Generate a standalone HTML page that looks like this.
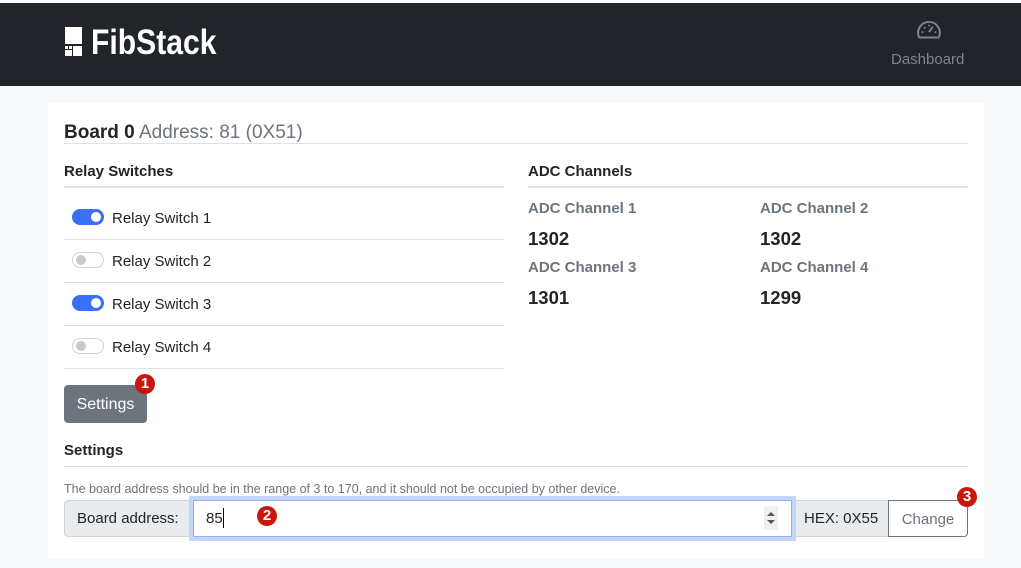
<!DOCTYPE html>
<html><head><meta charset="utf-8"><style>
*{box-sizing:border-box;margin:0;padding:0}
body{width:1021px;height:568px;overflow:hidden;background:#f8f9fa;font-family:"Liberation Sans",sans-serif;color:#212529;position:relative}
.a{position:absolute}
.nav{left:0;top:3px;width:1021px;height:83px;background:#212529}
.card{left:48px;top:103px;width:936px;height:456px;background:#fff}
.t{position:absolute;white-space:nowrap}
.line{position:absolute;background:#dee2e6}
.tog{position:absolute;left:72px;width:32px;height:16px;border-radius:8px}
.on{background:#3b6ff5}
.on::after{content:"";position:absolute;right:3px;top:3px;width:10px;height:10px;border-radius:50%;background:#fff}
.off{background:#fff;border:1px solid #ced4da}
.off::after{content:"";position:absolute;left:3px;top:2px;width:10px;height:10px;border-radius:50%;background:#c8cbce}
.badge{position:absolute;width:20px;height:20px;border-radius:50%;background:#c8170d;color:#fff;font-weight:bold;font-size:15px;text-align:center;line-height:20px}
</style></head><body>
<div class="a nav"></div>
<svg class="a" style="left:65px;top:27px" width="18" height="30" viewBox="0 0 18 30"><rect x="0" y="0" width="17" height="17" fill="#fff"/><rect x="0" y="19" width="3" height="3" fill="#fff"/><rect x="4" y="19" width="3" height="3" fill="#fff"/><rect x="0" y="23" width="7" height="6" fill="#fff"/><rect x="8" y="19" width="9" height="10" fill="#fff"/></svg>
<div class="t" style="left:91px;top:23px;font-size:35px;font-weight:bold;color:#fff;transform:scaleX(0.86);transform-origin:left top">FibStack</div>
<svg class="a" style="left:916px;top:20px" width="26" height="22" viewBox="0 0 24 20"><path d="M3 16 A10 10 0 1 1 21 16 Z" fill="none" stroke="#7f858a" stroke-width="1.8" stroke-linejoin="round"/><path d="M12 11 L15.5 6" stroke="#7f858a" stroke-width="1.8"/><circle cx="6" cy="11" r="0.9" fill="#7f858a"/><circle cx="8" cy="7" r="0.9" fill="#7f858a"/><circle cx="12" cy="5" r="0.9" fill="#7f858a"/><circle cx="18" cy="11" r="0.9" fill="#7f858a"/></svg>
<div class="t" style="left:891px;top:51px;font-size:15px;color:#7f858a">Dashboard</div>
<div class="a card"></div>
<div class="t" style="left:64px;top:122px;font-size:19px"><span style="font-weight:600">Board 0</span> <span style="color:#6c757d">Address: 81 (0X51)</span></div>
<div class="line" style="left:64px;top:143px;width:904px;height:1px"></div>
<div class="t" style="left:64px;top:163px;font-size:15px;font-weight:600">Relay Switches</div>
<div class="line" style="left:64px;top:186px;width:440px;height:2px"></div>
<div class="tog on" style="top:209px"></div><div class="t" style="left:112px;top:210px;font-size:15px">Relay Switch 1</div>
<div class="line" style="left:64px;top:239px;width:440px;height:1px"></div>
<div class="tog off" style="top:252px"></div><div class="t" style="left:112px;top:253px;font-size:15px">Relay Switch 2</div>
<div class="line" style="left:64px;top:282px;width:440px;height:1px"></div>
<div class="tog on" style="top:295px"></div><div class="t" style="left:112px;top:296px;font-size:15px">Relay Switch 3</div>
<div class="line" style="left:64px;top:325px;width:440px;height:1px"></div>
<div class="tog off" style="top:338px"></div><div class="t" style="left:112px;top:339px;font-size:15px">Relay Switch 4</div>
<div class="line" style="left:64px;top:368px;width:440px;height:1px"></div>
<div class="t" style="left:528px;top:163px;font-size:15px;font-weight:600">ADC Channels</div>
<div class="line" style="left:528px;top:186px;width:440px;height:2px"></div>
<div class="t" style="left:528px;top:200px;font-size:15px;color:#6c757d;font-weight:600">ADC Channel 1</div>
<div class="t" style="left:528px;top:228px;font-size:18.5px;font-weight:600">1302</div>
<div class="t" style="left:760px;top:200px;font-size:15px;color:#6c757d;font-weight:600">ADC Channel 2</div>
<div class="t" style="left:760px;top:228px;font-size:18.5px;font-weight:600">1302</div>
<div class="t" style="left:528px;top:259px;font-size:15px;color:#6c757d;font-weight:600">ADC Channel 3</div>
<div class="t" style="left:528px;top:287px;font-size:18.5px;font-weight:600">1301</div>
<div class="t" style="left:760px;top:259px;font-size:15px;color:#6c757d;font-weight:600">ADC Channel 4</div>
<div class="t" style="left:760px;top:287px;font-size:18.5px;font-weight:600">1299</div>
<div class="a" style="left:64px;top:385px;width:83px;height:38px;background:#6c757d;border-radius:4px;color:#fff;font-size:16px;text-align:center;line-height:40px">Settings</div>
<div class="badge" style="left:135px;top:374px">1</div>
<div class="t" style="left:64px;top:442px;font-size:15px;font-weight:600">Settings</div>
<div class="line" style="left:64px;top:466px;width:904px;height:1px"></div>
<div class="t" style="left:64px;top:482px;font-size:12.5px;color:#6c757d">The board address should be in the range of 3 to 170, and it should not be occupied by other device.</div>
<div class="a" style="left:64px;top:500px;width:904px;height:37px;border:1px solid #ced4da;border-radius:4px;background:#e9ecef"></div>
<div class="t" style="left:77px;top:510px;font-size:15px">Board address:</div>
<div class="a" style="left:189px;top:496px;width:607px;height:45px;border:4px solid #c5d5f7"></div>
<div class="a" style="left:193px;top:500px;width:599px;height:37px;background:#fff;border:1px solid #8fb0f5"></div>
<div class="t" style="left:206px;top:510px;font-size:15px">85</div>
<div class="a" style="left:223px;top:508px;width:1px;height:20px;background:#000"></div>
<div class="a" style="left:764px;top:506px;width:14px;height:24px;background:#f0f0f0"></div>
<svg class="a" style="left:766px;top:509px" width="10" height="18"><path d="M1 7 L5 3 L9 7Z M1 11 L5 15 L9 11Z" fill="#555"/></svg>
<div class="t" style="left:804px;top:510px;font-size:15px">HEX: 0X55</div>
<div class="a" style="left:888px;top:500px;width:80px;height:37px;background:#fff;border:1px solid #6c757d;border-radius:0 4px 4px 0;color:#6c757d;font-size:15px;text-align:center;line-height:37px">Change</div>
<div class="badge" style="left:957px;top:487px">3</div>
<div class="badge" style="left:257px;top:506px">2</div>
</body></html>
